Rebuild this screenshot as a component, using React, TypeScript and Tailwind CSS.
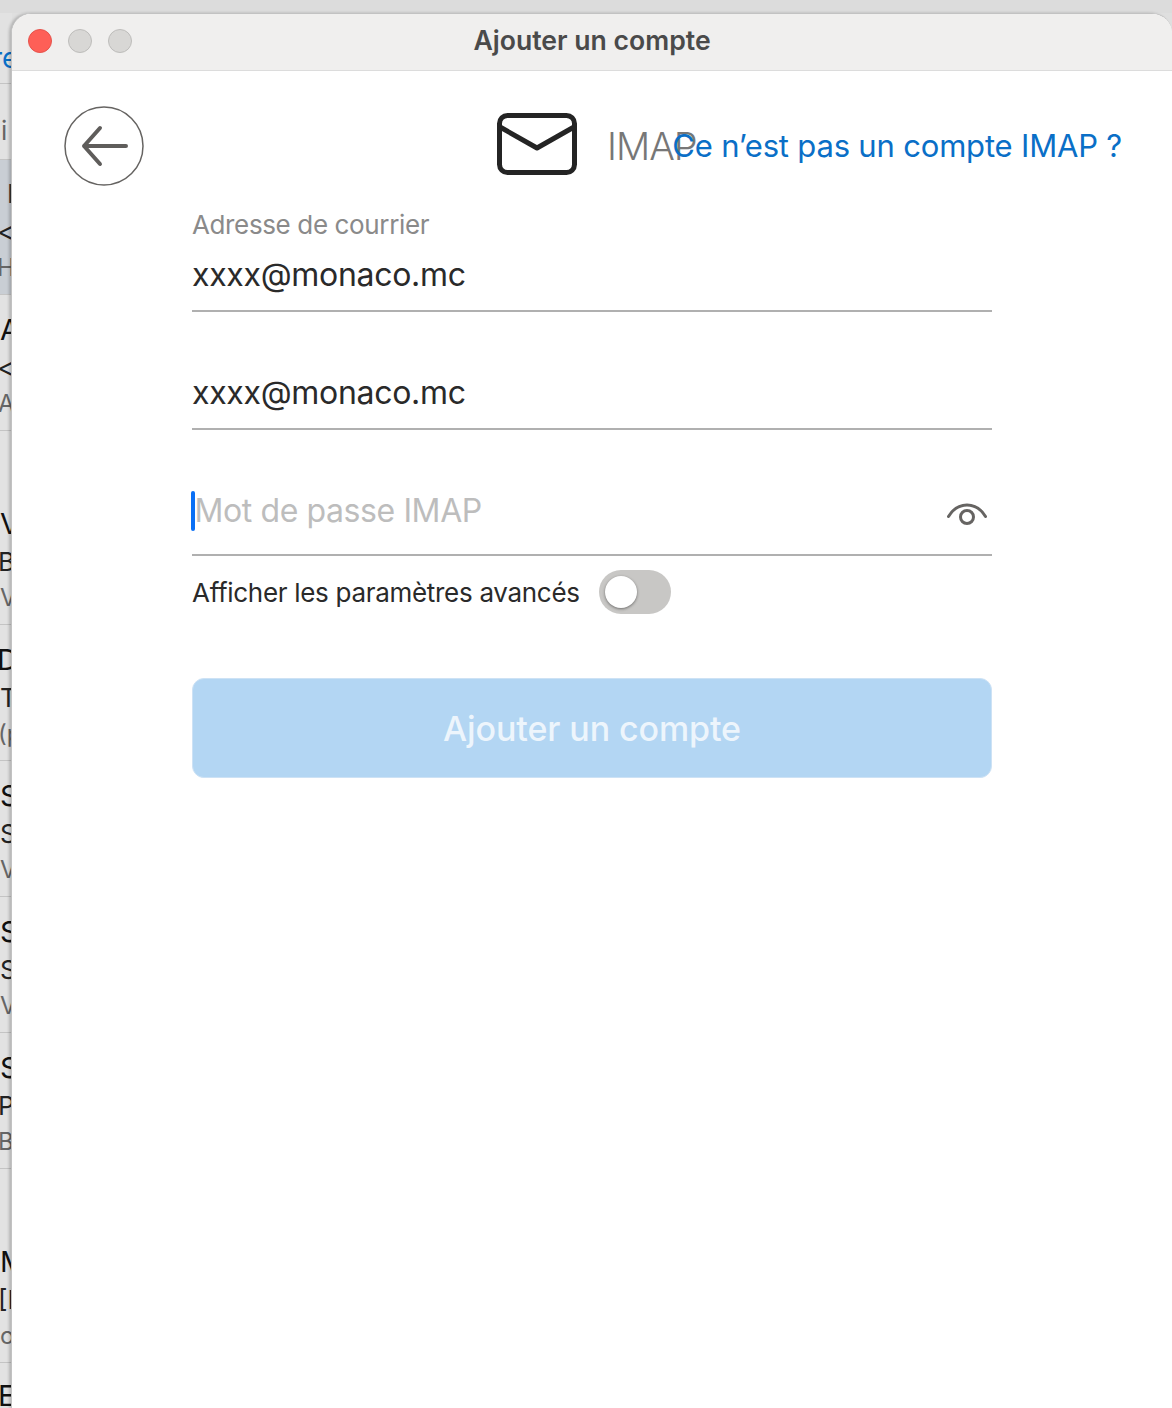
import React from 'react';

const FONT = "font-['Inter','Liberation_Sans',sans-serif]";

const TOP = 'text-[#111] text-[29px]';
const MID = 'text-[#222] text-[26px]';
const LOW = 'text-[#666] text-[24px]';

// Mail list of the window behind, almost entirely hidden by the dialog
const behindRows = [
  { h: 71, selected: false, lines: [{ t: 're', c: 'text-[#0a6fc7] text-[28px] -ml-[8px] pt-[3px]' }] },
  { h: 76, selected: false, lines: [{ t: 'i', c: 'text-[#666] text-[26px] ml-[1px]' }] },
  { h: 135, selected: true, lines: [{ t: 'I', c: 'text-[#333] text-[26px] ml-[7px]' }, { t: '<', c: MID + ' -ml-[3px]' }, { t: 'H', c: LOW + ' -ml-[3px]' }] },
  { h: 136, selected: false, lines: [{ t: 'A', c: TOP }, { t: '<', c: MID + ' -ml-[3px]' }, { t: 'A', c: LOW + ' -ml-[2px]' }] },
  { h: 194, selected: false, lines: [{ t: 'V', c: TOP }, { t: 'B', c: MID + ' -ml-[2px]' }, { t: 'V', c: LOW }] },
  { h: 136, selected: false, lines: [{ t: 'D', c: TOP + ' -ml-[3px]' }, { t: 'T', c: MID }, { t: '(p', c: LOW + ' -ml-[2px]' }] },
  { h: 136, selected: false, lines: [{ t: 'S', c: TOP }, { t: 'S', c: MID }, { t: 'V', c: LOW }] },
  { h: 136, selected: false, lines: [{ t: 'S', c: TOP }, { t: 'S', c: MID }, { t: 'V', c: LOW }] },
  { h: 136, selected: false, lines: [{ t: 'S', c: TOP }, { t: 'P', c: MID + ' -ml-[2px]' }, { t: 'B', c: LOW + ' -ml-[2px]' }] },
  { h: 194, selected: false, lines: [{ t: 'M', c: TOP }, { t: '[N', c: MID + ' -ml-[2px]' }, { t: 'o', c: LOW }] },
  { h: 62, selected: false, lines: [{ t: 'E', c: TOP + ' -ml-[2px]' }] },
];

const BackIcon = () => (
  <svg width="80" height="80" viewBox="0 0 80 80" fill="none" className="shrink-0">
    <circle cx="40" cy="40" r="39" stroke="#666462" strokeWidth="1.5" />
    <path d="M20 40H62M36 22L20 40L36 58" stroke="#5f5d5b" strokeWidth="4" strokeLinecap="round" strokeLinejoin="round" />
  </svg>
);

const MailIcon = () => (
  <svg width="80" height="62" viewBox="0 0 80 62" fill="none" className="block">
    <rect x="2.5" y="2.5" width="75" height="57" rx="8" stroke="#242424" strokeWidth="5" />
    <path d="M3 14L40 35L77 14" stroke="#242424" strokeWidth="5" strokeLinejoin="round" />
  </svg>
);

const EyeIcon = () => (
  <svg width="40" height="24" viewBox="0 0 40 24" fill="none" className="block">
    <path d="M1.5 13.5C6 6 12.5 2 20 2C27.5 2 34 6 38.5 13.5" stroke="#666462" strokeWidth="3" strokeLinecap="round" />
    <circle cx="20" cy="14" r="6.5" stroke="#666462" strokeWidth="3" />
  </svg>
);

export default function App() {
  return (
    <div className={`${FONT} w-[1172px] h-[1408px] overflow-hidden flex flex-col bg-[#dfdfdf]`}>
      <div className="h-[13px] shrink-0 bg-[#dcdcdc]" />
      <div className="flex flex-1 min-h-0">
        <div className="w-[12px] shrink-0 overflow-hidden bg-[#e2e2e2]">
          {behindRows.map((row, i) => (
            <div
              key={i}
              style={{ height: row.h }}
              className={`w-[60px] flex flex-col justify-end pb-[8px] border-b border-[#c4c4c4] ${row.selected ? 'bg-[#c9ced4]' : ''}`}
            >
              {row.lines.map((line, j) => (
                <div key={j} className={`h-[36px] whitespace-nowrap ${j === 0 ? 'leading-[32px]' : 'leading-[36px]'} ${line.c}`}>
                  {line.t}
                </div>
              ))}
            </div>
          ))}
        </div>

        <div className="flex-1 -ml-px bg-white rounded-t-[20px] overflow-hidden border-t border-l border-[#c2c2c2] shadow-[-2px_0_3px_rgba(0,0,0,0.2)] flex flex-col">
          <div className="h-[57px] shrink-0 bg-[#f0efee] border-b border-[#dcdcdc] flex items-center">
            <div className="w-[120px] flex items-center gap-[16px] pl-[16px] mb-[2px]">
              <span className="w-[24px] h-[24px] rounded-full bg-[#fe5f57] border border-[#e5534c]" />
              <span className="w-[24px] h-[24px] rounded-full bg-[#d8d7d5] border border-[#bdbcba]" />
              <span className="w-[24px] h-[24px] rounded-full bg-[#d8d7d5] border border-[#bdbcba]" />
            </div>
            <div className="flex-1 mb-[2px] text-center text-[26.6px] font-semibold text-[#4a4a4a]">Ajouter un compte</div>
            <div className="w-[120px]" />
          </div>

          <div className="flex items-center pl-[52px] pr-[50px] mt-[35px]">
            <BackIcon />
            <div className="ml-[353px] mb-[4px] shrink-0">
              <MailIcon />
            </div>
            <div className="ml-[30px] w-[65px] shrink-0 whitespace-nowrap text-[38px] font-light tracking-[-1px] text-[#777]">IMAP</div>
            <a className="ml-auto whitespace-nowrap text-[31px] tracking-[-0.18px] text-[#0a6fc7]">Ce n’est pas un compte IMAP ?</a>
          </div>

          <div className="ml-[180px] w-[800px] mt-[21px]">
            <div className="text-[26px] leading-[36px] tracking-[-0.37px] text-[#8a8a8a]">Adresse de courrier</div>
            <div className="h-[69px] leading-[64px] text-[32px] tracking-[-0.3px] text-[#2a2a2a] border-b-2 border-[#b0b0b0]">xxxx@monaco.mc</div>

            <div className="mt-[48px] h-[70px] leading-[66px] text-[32px] tracking-[-0.3px] text-[#2a2a2a] border-b-2 border-[#b0b0b0]">xxxx@monaco.mc</div>

            <div className="mt-[48px] h-[78px] border-b-2 border-[#b0b0b0] flex items-center">
              <span className="w-[3.5px] h-[40px] shrink-0 -ml-[1px] mb-[10px] rounded-full bg-[#0a6ff5]" />
              <span className="mb-[10px] text-[32px] tracking-[-0.4px] text-[#bdbdbd]">Mot de passe IMAP</span>
              <span className="ml-auto mr-[5px] mb-[2px]">
                <EyeIcon />
              </span>
            </div>

            <div className="flex items-center mt-[14px]">
              <span className="text-[26px] tracking-[-0.3px] text-[#2a2a2a]">Afficher les paramètres avancés</span>
              <span className="ml-[19px] w-[72px] h-[44px] rounded-full bg-[#c8c7c5] flex items-center pl-[6px]">
                <span className="w-[32px] h-[32px] rounded-full bg-white shadow-[0_1px_3px_rgba(0,0,0,0.45)]" />
              </span>
            </div>

            <button className="mt-[64px] w-full h-[100px] rounded-[12px] bg-[#b3d6f3] border border-[#cde2f5] text-[34px] tracking-[-0.1px] font-medium text-[#edf5fc]">
              Ajouter un compte
            </button>
          </div>
        </div>
      </div>
    </div>
  );
}
